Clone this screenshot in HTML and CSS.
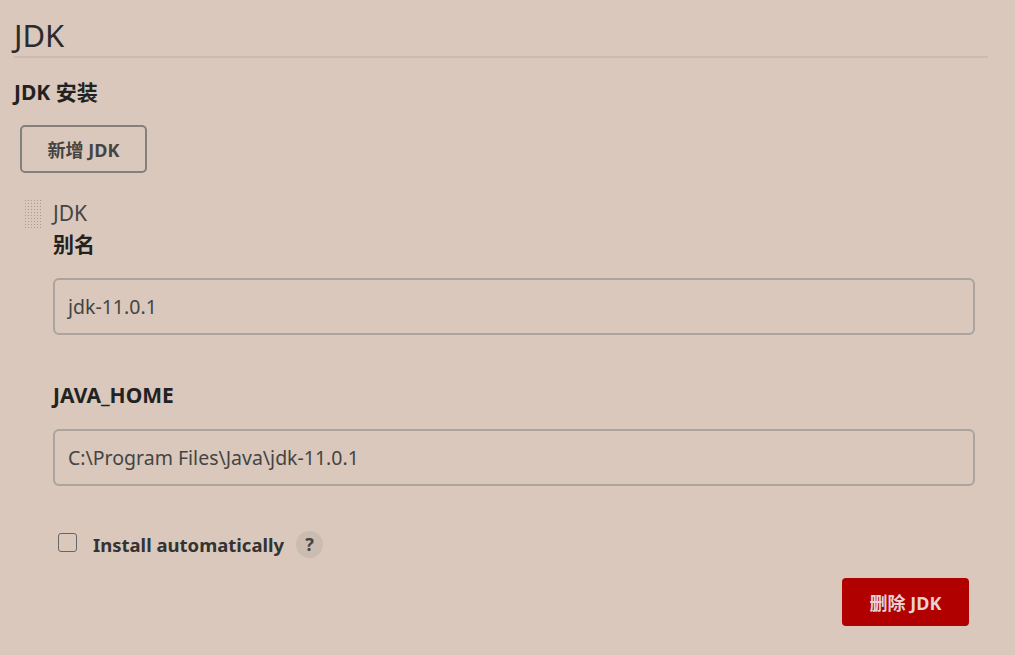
FILE: index.html
```html
<!DOCTYPE html>
<html lang="zh">
<head>
<meta charset="utf-8">
<title>JDK</title>
<link rel="stylesheet" href="styles.css">
</head>
<body>
<div class="page">
  <h1 class="section-title">JDK</h1>
  <h2 class="group-title">JDK 安装</h2>
  <button class="btn-add" type="button">新增 JDK</button>
  <div class="repeated">
    <div class="handle"></div>
    <div class="chunk">
      <div class="chunk-title">JDK</div>
      <label class="field-label">别名</label>
      <div class="text-input">jdk-11.0.1</div>
      <label class="field-label field-label-gap">JAVA_HOME</label>
      <div class="text-input">C:\Program Files\Java\jdk-11.0.1</div>
      <div class="check-row">
        <span class="checkbox"></span>
        <span class="check-label">Install automatically</span>
        <span class="help">?</span>
      </div>
      <div class="actions">
        <button class="btn-delete" type="button">删除 JDK</button>
      </div>
    </div>
  </div>
</div>
</body>
</html>
```

FILE: styles.css
```css
html, body {
  margin: 0;
  padding: 0;
}
body {
  background: #d9c8bb;
  color: #333;
  font-family: "Noto Sans", "Noto Sans CJK SC", sans-serif;
  font-size: 16px;
}
.page {
  padding: 15px 27px 0 14px;
}
.section-title {
  margin: 0;
  font-size: 31px;
  font-weight: 400;
  line-height: 40px;
  color: #2b2b2b;
  padding-bottom: 1px;
  border-bottom: 2px solid #ccbbae;
}
.group-title {
  margin: 20px 0 0 0;
  font-size: 21px;
  font-weight: 700;
  line-height: 28px;
  color: #222;
}
.btn-add {
  display: block;
  margin: 19px 0 0 6px;
  width: 127px;
  height: 48px;
  background: transparent;
  border: 2.5px solid #83807d;
  border-radius: 5px;
  font-family: "Noto Sans", "Noto Sans CJK SC", sans-serif;
  font-size: 18px;
  font-weight: 700;
  color: #444;
  padding: 0;
}
.repeated {
  display: flex;
  margin-top: 26px;
  margin-right: 13px;
}
.handle {
  width: 17px;
  height: 31px;
  margin-left: 10px;
  flex: none;
  background-image: radial-gradient(circle, #a59b93 0.75px, transparent 0.9px);
  background-size: 3px 3px;
}
.chunk {
  flex: 1;
  margin-left: 12px;
}
.chunk-title {
  font-size: 21px;
  line-height: 28px;
  color: #444;
}
.field-label {
  display: block;
  font-size: 21px;
  font-weight: 700;
  line-height: 28px;
  color: #222;
  margin-top: 3px;
}
.field-label-gap {
  margin-top: 46px;
}
.text-input {
  box-sizing: border-box;
  height: 57px;
  margin-top: 20px;
  border: 2px solid #aba39d;
  border-radius: 6px;
  padding: 0 13px;
  display: flex;
  align-items: center;
  font-size: 19.5px;
  color: #444;
}
.check-row {
  display: flex;
  align-items: center;
  height: 28px;
  margin-top: 44px;
  margin-left: 5px;
}
.checkbox {
  box-sizing: border-box;
  width: 19px;
  height: 19px;
  border: 1.5px solid #666;
  border-radius: 3px;
  flex: none;
  margin-top: -3px;
}
.check-label {
  margin-left: 16px;
  font-size: 18.5px;
  font-weight: 700;
  color: #333;
}
.help {
  margin-left: 12px;
  width: 27px;
  height: 27px;
  border-radius: 50%;
  background: #cbbcb1;
  display: flex;
  align-items: center;
  justify-content: center;
  font-size: 18px;
  font-weight: 700;
  color: #444;
}
.actions {
  display: flex;
  justify-content: flex-end;
  margin-top: 20px;
  margin-right: 6px;
}
.btn-delete {
  width: 127px;
  height: 48px;
  background: #b00000;
  border: none;
  border-radius: 4px;
  font-family: "Noto Sans", "Noto Sans CJK SC", sans-serif;
  font-size: 18px;
  font-weight: 700;
  color: #ead2d2;
  padding: 0;
}
```
